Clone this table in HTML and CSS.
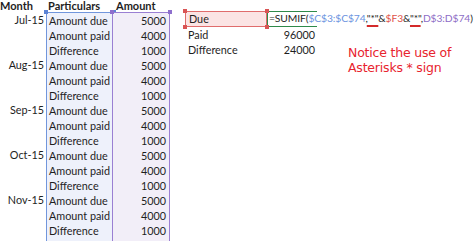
FILE: index.html
```html
<!DOCTYPE html>
<html>
<head>
<meta charset="utf-8">
<link rel="stylesheet" href="styles.css">
</head>
<body>
<div class="page">
  <div class="table">
    <div class="col month">
      <div class="hdr">Month</div>
      <div class="cell">Jul-15</div><div class="cell"></div><div class="cell"></div>
      <div class="cell">Aug-15</div><div class="cell"></div><div class="cell"></div>
      <div class="cell">Sep-15</div><div class="cell"></div><div class="cell"></div>
      <div class="cell">Oct-15</div><div class="cell"></div><div class="cell"></div>
      <div class="cell">Nov-15</div><div class="cell"></div><div class="cell"></div>
    </div>
    <div class="col part">
      <div class="hdr">Particulars</div>
      <div class="box blue">
        <span class="h tl"></span><span class="h tr"></span>
        <div class="cell">Amount due</div><div class="cell">Amount paid</div><div class="cell">Difference</div>
        <div class="cell">Amount due</div><div class="cell">Amount paid</div><div class="cell">Difference</div>
        <div class="cell">Amount due</div><div class="cell">Amount paid</div><div class="cell">Difference</div>
        <div class="cell">Amount due</div><div class="cell">Amount paid</div><div class="cell">Difference</div>
        <div class="cell">Amount due</div><div class="cell">Amount paid</div><div class="cell">Difference</div>
      </div>
    </div>
    <div class="col amt">
      <div class="hdr">Amount</div>
      <div class="box purple">
        <span class="h tl"></span><span class="h tr"></span>
        <div class="cell">5000</div><div class="cell">4000</div><div class="cell">1000</div>
        <div class="cell">5000</div><div class="cell">4000</div><div class="cell">1000</div>
        <div class="cell">5000</div><div class="cell">4000</div><div class="cell">1000</div>
        <div class="cell">5000</div><div class="cell">4000</div><div class="cell">1000</div>
        <div class="cell">5000</div><div class="cell">4000</div><div class="cell">1000</div>
      </div>
    </div>
  </div>
  <div class="side">
    <div class="srow">
      <div class="ecell due"><span class="h tl"></span><span class="h tr"></span><span class="h bl"></span><span class="h br"></span>Due</div>
      <div class="fcell edit">=SUMIF(<span class="c-blue">$C$3:$C$74</span>,<span class="ul">"*"</span>&amp;<span class="c-red">$F3</span>&amp;<span class="ul">"*"</span>,<span class="c-purple">D$3:D$74</span>)</div>
    </div>
    <div class="srow">
      <div class="ecell">Paid</div>
      <div class="fcell num">96000</div>
    </div>
    <div class="srow">
      <div class="ecell">Difference</div>
      <div class="fcell num">24000</div>
      <div class="note">Notice the use of<br>Asterisks * sign</div>
    </div>
  </div>
</div>
</body>
</html>
```

FILE: styles.css
```css
html, body {
  margin: 0;
  padding: 0;
  background: #ffffff;
}
body {
  width: 474px;
  height: 241px;
  overflow: hidden;
  font-family: Lato, "Liberation Sans", sans-serif;
  font-size: 10.8px;
  color: #1e1e1e;
}
.page {
  display: flex;
  align-items: flex-start;
}
.table {
  display: flex;
}
.col {
  display: flex;
  flex-direction: column;
}
.hdr {
  height: 12px;
  line-height: 11px;
  font-weight: bold;
  font-size: 11px;
  white-space: nowrap;
}
.cell {
  height: 15px;
  line-height: 15px;
  white-space: nowrap;
}
.month { width: 46px; }
.month .hdr { text-align: left; }
.month .cell { text-align: right; padding-right: 2px; }
.part { width: 66px; }
.part .hdr { padding-left: 2px; }
.part .cell { padding-left: 2px; }
.amt { width: 58px; }
.amt .hdr { padding-left: 4px; }
.amt .cell { text-align: right; padding-right: 3px; }
.box {
  position: relative;
  border-top: 1.5px solid;
  border-left: 1.5px solid;
  border-right: 1.5px solid;
  height: 240px;
}
.box.blue {
  border-color: #7196dc;
  background: #eef1fb;
  margin-right: -1.5px;
}
.box.purple {
  border-color: #9a7fd3;
  background: #f2eef8;
}
.h {
  position: absolute;
  width: 4px;
  height: 4px;
}
.blue .h { background: #5b84d6; }
.purple .h { background: #8e6fcd; }
.tl { left: -3px; top: -3px; }
.tr { right: -3px; top: -3px; }
.bl { left: -3px; bottom: -3px; }
.br { right: -3px; bottom: -3px; }

.side {
  margin-left: 15px;
  margin-top: 11px;
  display: flex;
  flex-direction: column;
}
.srow {
  display: flex;
  height: 15px;
  line-height: 15px;
  white-space: nowrap;
  position: relative;
}
.srow:first-child { height: 16px; line-height: 16px; }
.ecell {
  width: 82px;
  box-sizing: border-box;
  padding-left: 3px;
  position: relative;
}
.ecell.due {
  background: #fbe4e4;
  border: 1.5px solid #e06c6c;
  line-height: 13px;
}
.due .h { background: #d95454; }
.fcell {
  width: 50px;
  box-sizing: border-box;
}
.fcell.num { text-align: right; padding-right: 2px; }
.fcell.edit {
  border-top: 1.5px solid #2f8a4a;
  border-bottom: 1.5px solid #2f8a4a;
  border-left: 1.5px solid #2f8a4a;
  width: 50px;
  line-height: 13px;
  padding-left: 1px;
  overflow: visible;
  font-size: 10.3px;
  letter-spacing: -0.1px;
}
.c-blue { color: #6b93e0; }
.c-red { color: #e0524a; }
.c-purple { color: #8d6dc6; }
.ul {
  text-decoration: underline;
  text-decoration-color: #d42a2a;
  text-decoration-thickness: 1.5px;
  text-underline-offset: 3px;
}
.note {
  position: absolute;
  left: 163px;
  top: 3px;
  color: #e8242e;
  font-family: "DejaVu Sans", sans-serif;
  font-size: 12.5px;
  line-height: 15px;
  letter-spacing: -0.2px;
}
```
